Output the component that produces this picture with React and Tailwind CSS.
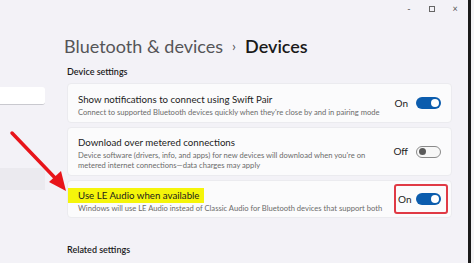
export default function App() {
  const font = { fontFamily: 'Lato, "Noto Sans", sans-serif' };
  const Toggle = ({ on }) =>
    on ? (
      <div className="w-[25px] h-[12px] rounded-full bg-[#0b5cad] flex items-center justify-end pr-[2px]">
        <div className="w-[8px] h-[8px] rounded-full bg-white" />
      </div>
    ) : (
      <div className="w-[25px] h-[12px] rounded-full border border-[#8a8a8a] bg-[#f7f7f7] flex items-center pl-[2px]">
        <div className="w-[7px] h-[7px] rounded-full bg-[#5a5a5a]" />
      </div>
    );
  return (
    <div className="w-[474px] h-[263px] flex overflow-hidden bg-[#f6f6f8]" style={font}>
      <div className="w-[468px] h-full bg-[#f3f2f7] flex flex-col relative">
        {/* title bar */}
        <div className="h-[17px] flex justify-end items-center pr-[9px] gap-[15px] text-[9px] text-[#555]">
          <span className="w-[8px] text-center">-</span>
          <span className="w-[8px] flex justify-center">
            <span className="w-[6px] h-[6px] border border-[#666]" />
          </span>
          <span className="w-[8px] text-center">×</span>
        </div>
        <div className="flex flex-1">
          {/* sidebar */}
          <div className="w-[45px] flex flex-col">
            <div className="h-[70px]" />
            <div className="h-[18px] bg-white rounded-r-[3px] border-b border-[#c9c9cf]" />
            <div className="h-[63px]" />
            <div className="h-[22px] bg-[#ebeaef]" />
          </div>
          {/* main */}
          <div className="flex-1 pl-[22px] pr-[16px] flex flex-col">
            <div className="h-[44px] flex items-center -ml-[3px] pt-[14px] text-[18px] leading-none whitespace-nowrap">
              <span className="text-[#555558]">Bluetooth &amp; devices</span>
              <span className="text-[#555558] mx-[9px] text-[14px]">›</span>
              <span className="text-[#1a1a1a] font-semibold">Devices</span>
            </div>
            <div className="h-[22px] flex items-center text-[9px] font-semibold text-[#1b1b1b]">Device settings</div>
            <div className="flex flex-col gap-[4px]">
              <div className="h-[40px] bg-[#fbfbfc] rounded-[4px] border border-[#ebebef] flex items-center pl-[10px] pr-[10px]">
                <div className="flex-1 flex flex-col pt-[3px]">
                  <span className="text-[9.7px] leading-[13px] text-[#1b1b1b]">Show notifications to connect using Swift Pair</span>
                  <span className="mt-[1px] text-[7.6px] leading-[10px] text-[#6b6b6b] whitespace-nowrap">Connect to supported Bluetooth devices quickly when they're close by and in pairing mode</span>
                </div>
                <span className="text-[10px] text-[#1b1b1b] mr-[8px]">On</span>
                <Toggle on />
              </div>
              <div className="h-[49px] bg-[#fbfbfc] rounded-[4px] border border-[#ebebef] flex items-center pl-[10px] pr-[10px]">
                <div className="flex-1 flex flex-col pt-[3px]">
                  <span className="text-[9.7px] leading-[13px] text-[#1b1b1b]">Download over metered connections</span>
                  <span className="mt-[1px] text-[7.6px] leading-[10px] text-[#6b6b6b]">
                    <span className="whitespace-nowrap">Device software (drivers, info, and apps) for new devices will download when you're on</span>
                    <br />
                    <span className="whitespace-nowrap">metered internet connections—data charges may apply</span>
                  </span>
                </div>
                <span className="text-[10px] text-[#1b1b1b] mr-[8px]">Off</span>
                <Toggle on={false} />
              </div>
              <div className="h-[38px] bg-[#fbfbfc] rounded-[4px] border border-[#ebebef] flex items-center pr-[3px]">
                <div className="flex-1 flex flex-col pt-[3px]">
                  <span className="self-start bg-[#f5f50a] pl-[10px] pr-[5px] text-[9.7px] leading-[15px] text-[#1b1b1b]">Use LE Audio when available</span>
                  <span className="pl-[10px] text-[7.6px] leading-[10px] text-[#6b6b6b] whitespace-nowrap">Windows will use LE Audio instead of Classic Audio for Bluetooth devices that support both</span>
                </div>
                <div className="h-[30px] w-[54px] border-2 border-[#e03a45] rounded-[3px] flex items-center justify-between pl-[2px] pr-[5px]">
                  <span className="text-[10px] text-[#1b1b1b]">On</span>
                  <Toggle on />
                </div>
              </div>
            </div>
            <div className="h-[25px]" />
            <div className="text-[9px] font-semibold text-[#1b1b1b]">Related settings</div>
          </div>
        </div>
        {/* red arrow */}
        <svg className="absolute left-0 top-0 pointer-events-none" width="474" height="263">
          <line x1="12" y1="133" x2="58" y2="181" stroke="#e8141a" strokeWidth="3.5" strokeLinecap="round" />
          <polygon points="66,191 49,182 61,171" fill="#e8141a" />
        </svg>
      </div>
      <div className="w-[3px] h-full bg-[#1a1a1a]" />
      <div className="flex-1 h-full bg-[#f4f4f6]" />
    </div>
  );
}
